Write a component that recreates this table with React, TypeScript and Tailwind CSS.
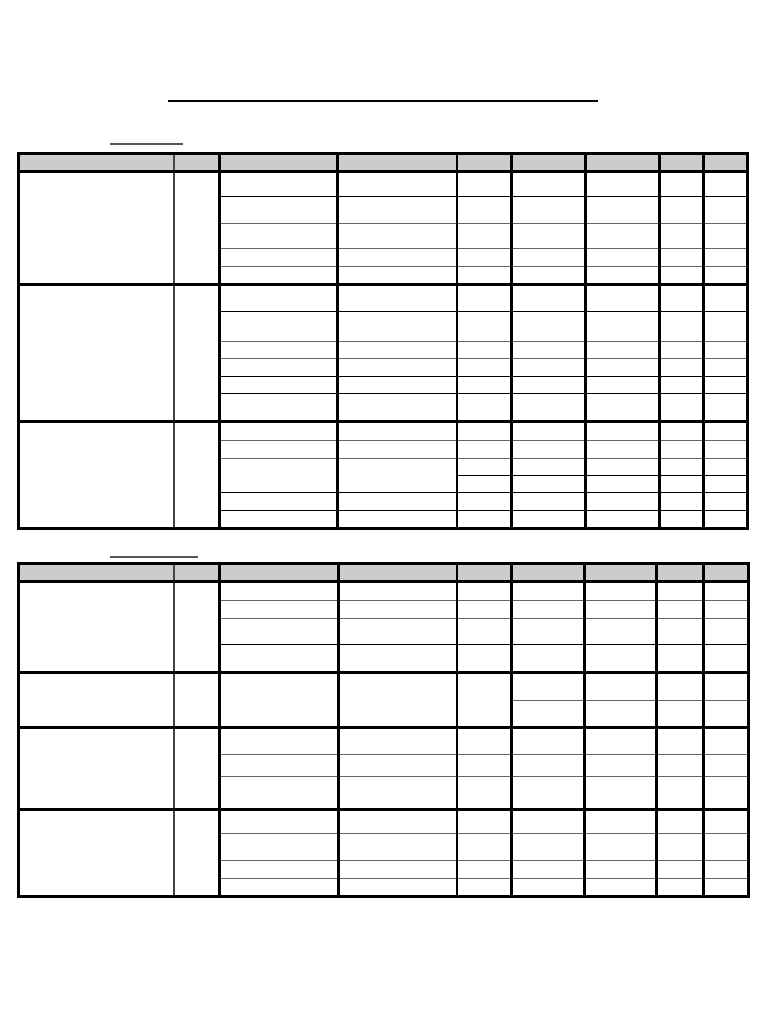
import React from 'react';

// 空欄の記入表（見出し・本文なしの様式）
type Span = { row: number; col: number; rows: number };
type Group = { heights: number[]; lines: ('k' | 'g')[]; spans?: Span[] };

const table1: Group[] = [
  { heights: [25, 27, 25, 18, 18], lines: ['k', 'g', 'g', 'g'] },
  { heights: [27, 30, 17, 18, 17, 28], lines: ['k', 'g', 'g', 'k', 'k'] },
  {
    heights: [19, 18, 17, 17, 18, 18],
    lines: ['g', 'g', 'k', 'k', 'k'],
    spans: [
      { row: 2, col: 2, rows: 2 },
      { row: 2, col: 3, rows: 2 },
    ],
  },
];

const table2: Group[] = [
  { heights: [19, 18, 26, 28], lines: ['g', 'g', 'k'] },
  {
    heights: [28, 27],
    lines: ['g'],
    spans: [
      { row: 0, col: 2, rows: 2 },
      { row: 0, col: 3, rows: 2 },
      { row: 0, col: 4, rows: 2 },
    ],
  },
  { heights: [27, 22, 33], lines: ['g', 'g'] },
  { heights: [24, 27, 18, 18], lines: ['g', 'g', 'g'] },
];

// 列の右罫線
const colRight = [
  'border-r-2 border-r-[#444]',
  'border-r-[3px] border-r-black',
  'border-r-[3px] border-r-black',
  'border-r-2 border-r-black',
  'border-r-[3px] border-r-black',
  'border-r-[3px] border-r-black',
  'border-r-[3px] border-r-black',
  'border-r-[3px] border-r-black',
  'border-r-[3px] border-r-black',
];

function FormTable({ widths, groups }: { widths: number[]; groups: Group[] }) {
  return (
    <table className="table-fixed border-collapse border-[3px] border-black">
      <colgroup>
        {widths.map((w, i) => (
          <col key={i} style={{ width: w }} />
        ))}
      </colgroup>
      <thead>
        <tr className="h-[18px]">
          {widths.map((_, i) => (
            <th
              key={i}
              className={`bg-[#cccccc] p-0 border-b-[3px] border-b-black ${colRight[i]}`}
            />
          ))}
        </tr>
      </thead>
      <tbody>
        {groups.map((g, gi) => {
          const covered = new Set<string>();
          const total = g.heights.length;
          return g.heights.map((h, r) => {
            const cells: React.ReactNode[] = [];
            if (r === 0) {
              cells.push(
                <td
                  key="a"
                  rowSpan={total}
                  className={`p-0 border-b-[3px] border-b-black ${colRight[0]}`}
                />,
                <td
                  key="b"
                  rowSpan={total}
                  className={`p-0 border-b-[3px] border-b-black ${colRight[1]}`}
                />
              );
            }
            for (let c = 2; c < 9; c++) {
              if (covered.has(`${r}-${c}`)) continue;
              const span = g.spans?.find((s) => s.row === r && s.col === c);
              const rows = span ? span.rows : 1;
              for (let k = 1; k < rows; k++) covered.add(`${r + k}-${c}`);
              const endRow = r + rows - 1;
              const line = g.lines[endRow];
              const bottom =
                endRow === total - 1
                  ? 'border-b-[3px] border-b-black'
                  : line === 'g'
                    ? 'border-b border-b-[#666]'
                    : 'border-b border-b-black';
              cells.push(
                <td key={c} rowSpan={rows} className={`p-0 ${bottom} ${colRight[c]}`} />
              );
            }
            return (
              <tr key={`${gi}-${r}`} style={{ height: h }}>
                {cells}
              </tr>
            );
          });
        })}
      </tbody>
    </table>
  );
}

export default function App() {
  return (
    <div className="min-h-[1024px] w-[768px] bg-white font-['Liberation_Sans',sans-serif]">
      <div className="pt-[100px]">
        {/* タイトル */}
        <div className="ml-[168px] h-[2px] w-[430px] bg-black" />

        {/* 区分1 */}
        <div className="ml-[110px] mt-[41px] h-[2px] w-[73px] bg-[#555]" />
        <div className="ml-[17px] mt-[7px]">
          <FormTable widths={[155, 46, 118, 119, 55, 74, 74, 44, 44]} groups={table1} />
        </div>

        {/* 区分2 */}
        <div className="ml-[110px] mt-[26px] h-[2px] w-[88px] bg-[#555]" />
        <div className="ml-[17px] mt-[4px]">
          <FormTable widths={[155, 46, 119, 118, 55, 73, 72, 47, 45]} groups={table2} />
        </div>
      </div>
    </div>
  );
}
